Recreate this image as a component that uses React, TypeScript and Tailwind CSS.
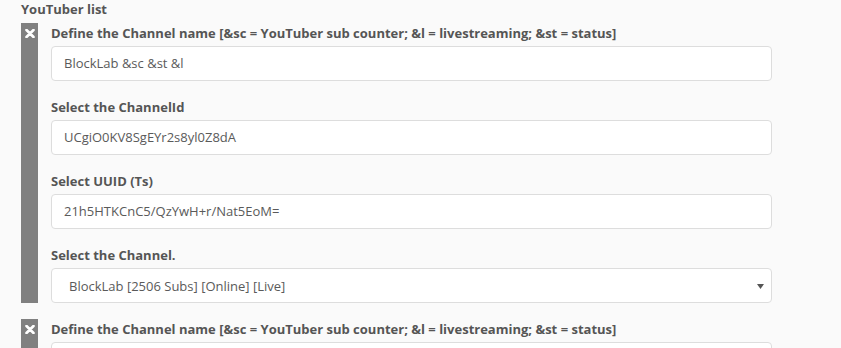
import React from "react";

type Field = {
  label: string;
  value: string;
  select?: boolean;
};

const fields: Field[] = [
  {
    label:
      "Define the Channel name [&sc = YouTuber sub counter; &l = livestreaming; &st = status]",
    value: "BlockLab &sc &st &l",
  },
  { label: "Select the ChannelId", value: "UCgiO0KV8SgEYr2s8yl0Z8dA" },
  { label: "Select UUID (Ts)", value: "21h5HTKCnC5/QzYwH+r/Nat5EoM=" },
  {
    label: "Select the Channel.",
    value: "BlockLab [2506 Subs] [Online] [Live]",
    select: true,
  },
];

function CloseIcon() {
  return (
    <svg width="10" height="9" viewBox="0 0 10 9" className="block">
      <path
        d="M1.5 1 L8.5 8 M8.5 1 L1.5 8"
        stroke="#ffffff"
        strokeWidth="2.6"
        strokeLinecap="round"
      />
    </svg>
  );
}

function FieldRow({ field, last }: { field: Field; last: boolean }) {
  return (
    <div className={last ? "" : "mb-[16px]"}>
      <label className="block h-[20px] leading-[20px] mb-[3px] font-bold text-[13px] text-[#555555]">
        {field.label}
      </label>
      {field.select ? (
        <div className="relative h-[35px] w-full rounded-[4px] border border-[#dddddd] bg-white">
          <span className="block pl-[17px] pt-[2px] leading-[31px] text-[13px] text-[#5a5a5a]">
            {field.value}
          </span>
          <svg
            width="7"
            height="5"
            viewBox="0 0 7 5"
            className="absolute right-[7px] top-[15px]"
          >
            <path d="M0 0 H7 L3.5 5 Z" fill="#555555" />
          </svg>
        </div>
      ) : (
        <div className="h-[35px] w-full rounded-[4px] border border-[#dddddd] bg-white">
          <span className="block pl-[12px] leading-[33px] text-[13px] text-[#5a5a5a]">
            {field.value}
          </span>
        </div>
      )}
    </div>
  );
}

function YoutuberEntry() {
  return (
    <div className="flex mb-[16px]">
      <div className="w-[17px] shrink-0 bg-[#808080] flex justify-center pt-[6px]">
        <div>
          <CloseIcon />
        </div>
      </div>
      <div className="w-[721px] ml-[13px]">
        {fields.map((f, i) => (
          <FieldRow key={i} field={f} last={i === fields.length - 1} />
        ))}
      </div>
    </div>
  );
}

export default function App() {
  return (
    <div
      className="min-h-screen bg-[#fafafa] pl-[21px] overflow-hidden h-[348px]"
      style={{ fontFamily: '"Open Sans", sans-serif' }}
    >
      <h3 className="h-[18px] leading-[18px] font-bold text-[13px] text-[#555555] mb-[5px]">
        YouTuber list
      </h3>
      <YoutuberEntry />
      <YoutuberEntry />
    </div>
  );
}
